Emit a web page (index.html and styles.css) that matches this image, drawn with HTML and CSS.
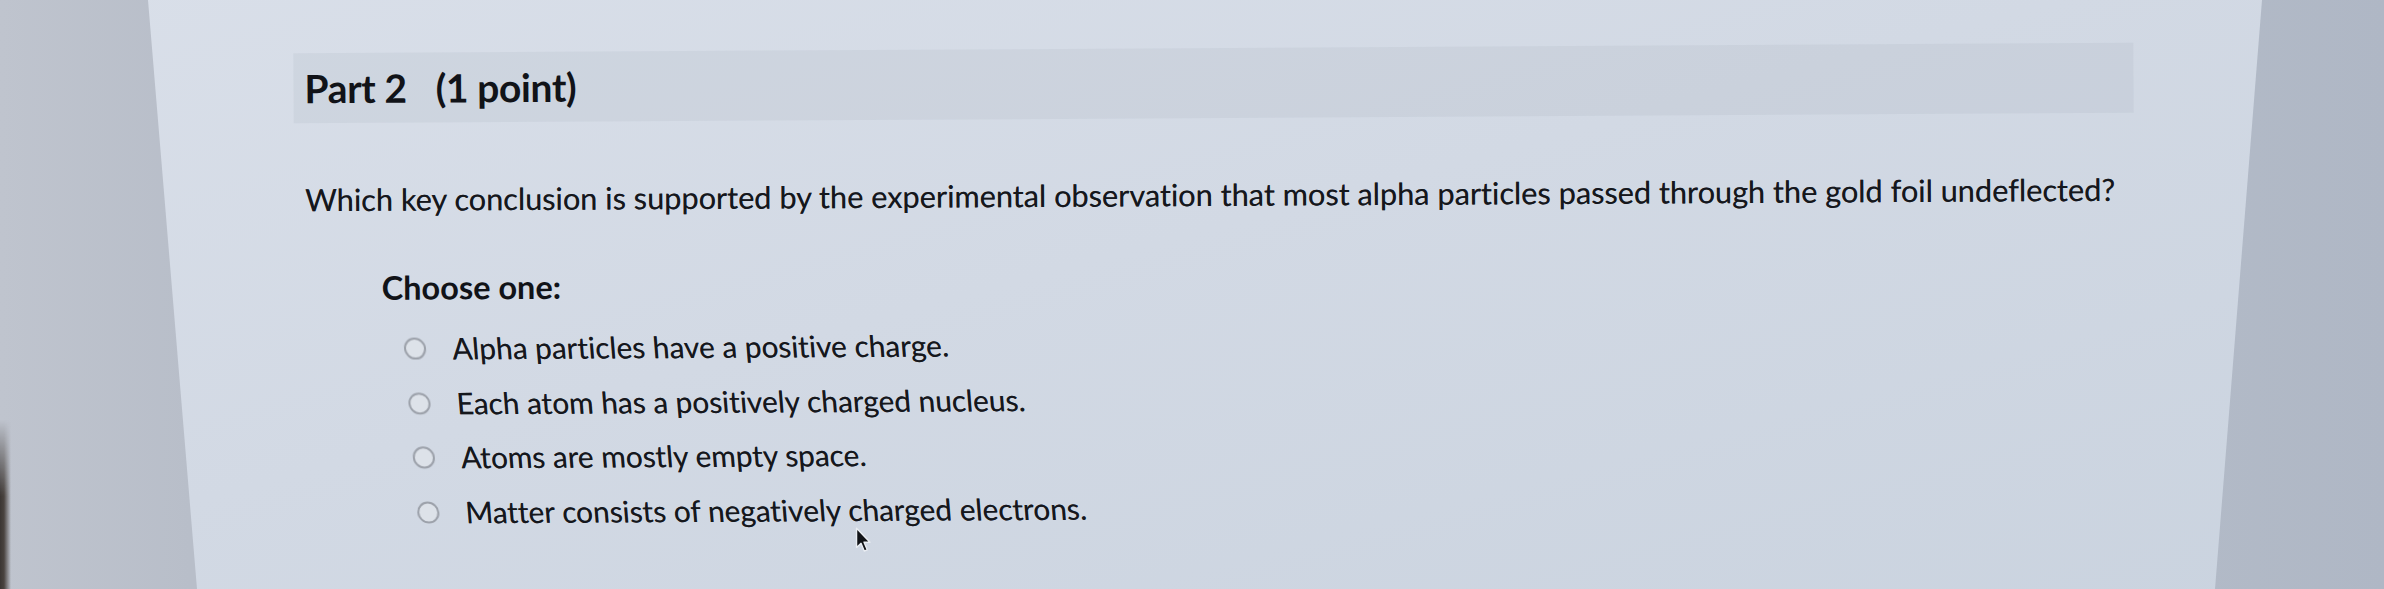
FILE: index.html
```html
<!DOCTYPE html>
<html lang="en">
<head>
<meta charset="utf-8">
<title>Part 2</title>
<link rel="stylesheet" href="styles.css">
</head>
<body>
<div class="screen">
  <div class="panel">
    <main class="content">
      <header class="part-bar">
        <span class="part-title">Part 2</span>
        <span class="part-points">(1 point)</span>
      </header>
      <p class="question">Which key conclusion is supported by the experimental observation that most alpha particles passed through the gold foil undeflected?</p>
      <h3 class="choose">Choose one:</h3>
      <ul class="options">
        <li class="option"><span class="radio"></span><span class="label">Alpha particles have a positive charge.</span></li>
        <li class="option"><span class="radio"></span><span class="label">Each atom has a positively charged nucleus.</span></li>
        <li class="option"><span class="radio"></span><span class="label">Atoms are mostly empty space.</span></li>
        <li class="option"><span class="radio"></span><span class="label">Matter consists of negatively charged electrons.</span></li>
      </ul>
    </main>
  </div>
  <svg class="cursor" width="18" height="26" viewBox="0 0 14 21" aria-hidden="true">
    <path d="M1 1 L1 16.5 L4.6 13.2 L7.2 19.4 L9.6 18.4 L7 12.3 L11.8 12.3 Z" fill="#111317" stroke="#e9edf2" stroke-width="1.1" stroke-linejoin="round"/>
  </svg>
</div>
</body>
</html>
```

FILE: styles.css
```css
html, body {
  margin: 0;
  padding: 0;
}

body {
  width: 2384px;
  height: 589px;
  overflow: hidden;
  font-family: Lato, "Open Sans", "Liberation Sans", sans-serif;
  font-variant-ligatures: none;
  color: #15171c;
}

.screen {
  position: relative;
  width: 2384px;
  height: 589px;
  background: linear-gradient(90deg, #bfc4ce 0%, #b8bec9 8%, #b2bac7 92%, #afb7c5 100%);
}

.screen::before {
  content: "";
  position: absolute;
  left: 0;
  top: 420px;
  width: 11px;
  height: 169px;
  background: linear-gradient(90deg, #3b3633 0, #4a4440 4px, rgba(90, 84, 80, 0) 11px);
  -webkit-mask-image: linear-gradient(180deg, transparent 0, #000 45%);
  mask-image: linear-gradient(180deg, transparent 0, #000 45%);
}

.panel {
  height: 589px;
  clip-path: polygon(148px 0, 2262px 0, 2215px 589px, 197px 589px);
  background: linear-gradient(165deg, #d9dfe9 0%, #d2d9e4 45%, #cad3df 100%);
  overflow: hidden;
}

.content {
  transform: rotate(-0.33deg);
  transform-origin: 0 0;
  padding-top: 55px;
}

.part-bar {
  display: flex;
  align-items: center;
  gap: 29px;
  margin-left: 293px;
  width: 1840px;
  height: 70px;
  padding-left: 11px;
  box-sizing: border-box;
  background: rgba(96, 108, 128, 0.07);
}

.part-title,
.part-points {
  font-weight: 700;
  font-size: 39px;
  line-height: 1;
  color: #111318;
  letter-spacing: -0.4px;
}

.question {
  margin: 57px 0 0 304px;
  font-size: 30.7px;
  line-height: 40px;
  font-weight: 400;
  white-space: nowrap;
  text-shadow: 0 0 0.6px rgba(10, 12, 18, 0.6);
}

.choose {
  margin: 48px 0 0 380px;
  font-size: 32.5px;
  line-height: 40px;
  font-weight: 700;
  color: #111318;
}

.options {
  list-style: none;
  margin: 14px 0 0 400px;
  padding: 0;
  transform: skewX(4.3deg);
  transform-origin: 0 0;
}

.option {
  display: flex;
  align-items: center;
  gap: 26px;
  height: 54.5px;
  font-size: 29.8px;
  line-height: 54px;
  white-space: nowrap;
  text-shadow: 0 0 0.6px rgba(10, 12, 18, 0.6);
}

.radio {
  flex: none;
  width: 18px;
  height: 18px;
  border: 2.5px solid #9ca1aa;
  border-radius: 50%;
  background: #dde2e9;
  filter: blur(0.3px);
}

.cursor {
  position: absolute;
  left: 855px;
  top: 527px;
  filter: blur(0.4px);
}
```
